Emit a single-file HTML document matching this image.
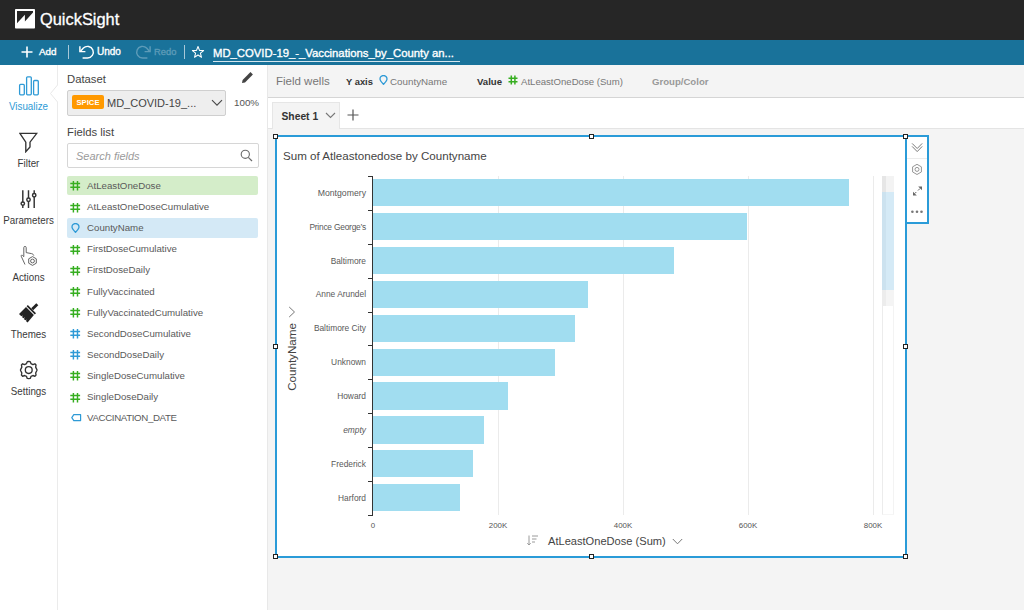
<!DOCTYPE html>
<html><head><meta charset="utf-8">
<style>
*{box-sizing:border-box;margin:0;padding:0}
html,body{width:1024px;height:610px;overflow:hidden;background:#f4f4f4;font-family:"Liberation Sans",sans-serif;color:#444}
.a{position:absolute;white-space:nowrap}
#top{position:absolute;left:0;top:0;width:1024px;height:40px;background:#262626}
#tb{position:absolute;left:0;top:40px;width:1024px;height:25px;background:#19729a;z-index:5}
#rail{position:absolute;left:0;top:64px;width:58px;height:546px;background:#fff;border-right:1px solid #ebebeb;z-index:2}
#panel{position:absolute;left:57px;top:64px;width:211px;height:546px;background:#fff;border-right:1px solid #e8e8e8}
#wells{position:absolute;left:268px;top:64px;width:756px;height:34px;background:#f4f4f4;border-bottom:1px solid #d5d5d5}
#tabs{position:absolute;left:268px;top:98px;width:756px;height:31px;background:#fff;border-bottom:1px solid #e4e4e4}
.rl{font-size:9.8px;color:#3a3a3a;text-align:center;width:57px;left:0;transform:scaleY(1.08)}
.fl{font-size:9.7px;color:#5a5a5a}
</style></head><body>
<div id="top">
  <svg class="a" style="left:15px;top:9px" width="20" height="20" viewBox="0 0 20 20">
    <rect x="0" y="0" width="20" height="19.6" rx="0.8" fill="#fff"/>
    <path d="M2 2 H18 V3.6 L9.9 12.5 V5.8 L2 14.2 Z" fill="#262626"/>
  </svg>
  <div class="a" style="left:40px;top:9px;font-size:16.4px;color:#fff;-webkit-text-stroke:0.3px #fff;line-height:20px">QuickSight</div>
</div>
<div id="tb">
  <svg class="a" style="left:21px;top:6px" width="12" height="12" viewBox="0 0 12 12"><path d="M6 0.5V11.5M0.5 6H11.5" stroke="#fff" stroke-width="1.6"/></svg>
  <div class="a" style="left:39px;top:5px;font-size:9.9px;color:#fff;-webkit-text-stroke:0.35px #fff;line-height:14px">Add</div>
  <div class="a" style="left:68px;top:5px;width:1px;height:14px;background:#a8c8d8"></div>
  <svg class="a" style="left:79px;top:5px" width="16" height="15" viewBox="0 0 16 15"><path d="M1.3 6.4 L4.4 3.1 A5.8 5.8 0 1 1 8.5 13 H3.6" fill="none" stroke="#fff" stroke-width="1.45"/><path d="M0.9 1.2 V6.6 H6.4" fill="none" stroke="#fff" stroke-width="1.45"/></svg>
  <div class="a" style="left:97px;top:5px;font-size:10px;color:#fff;-webkit-text-stroke:0.35px #fff;line-height:14px">Undo</div>
  <svg class="a" style="left:135px;top:5px" width="16" height="15" viewBox="0 0 16 15"><g transform="translate(16,0) scale(-1,1)"><path d="M1.3 6.4 L4.4 3.1 A5.8 5.8 0 1 1 8.5 13 H3.6" fill="none" stroke="#5d9bb8" stroke-width="1.45"/><path d="M0.9 1.2 V6.6 H6.4" fill="none" stroke="#5d9bb8" stroke-width="1.45"/></g></svg>
  <div class="a" style="left:154px;top:5px;font-size:9.4px;color:#5d9bb8;-webkit-text-stroke:0.35px #5d9bb8;line-height:14px">Redo</div>
  <div class="a" style="left:184px;top:5px;width:1px;height:14px;background:#a8c8d8"></div>
  <svg class="a" style="left:191px;top:5px" width="14" height="14" viewBox="0 0 14 14"><path d="M7 1.5 L8.5 5.4 L12.6 5.6 L9.4 8.2 L10.5 12.3 L7 10 L3.5 12.3 L4.6 8.2 L1.4 5.6 L5.5 5.4 Z" fill="none" stroke="#fff" stroke-width="1.05" stroke-linejoin="round"/></svg>
  <div class="a" style="left:213px;top:6px;font-size:11.3px;color:#fff;-webkit-text-stroke:0.35px #fff;line-height:15px">MD_COVID-19_-_Vaccinations_by_County an...</div>
  <div class="a" style="left:213px;top:20.6px;width:247px;height:1.4px;background:#d5e6ee"></div>
</div>
<div id="rail">
  <svg class="a" style="left:18px;top:12px" width="22" height="21" viewBox="0 0 22 21"><g fill="none" stroke="#2e9ad6" stroke-width="1.3"><rect x="1.6" y="8.4" width="4.7" height="10.4" rx="1"/><rect x="8.6" y="0.8" width="4.7" height="18" rx="1"/><rect x="15.6" y="4.5" width="4.7" height="14.3" rx="1"/></g></svg>
  <div class="a rl" style="top:36.8px;color:#2e9ad6">Visualize</div>
  <svg class="a" style="left:19px;top:68px" width="19" height="21" viewBox="0 0 19 21"><path d="M0.9 1.3 H17.8 L11 10.2 V15 L6.8 19.7 V10.2 Z" fill="none" stroke="#333" stroke-width="1.35" stroke-linejoin="miter"/></svg>
  <div class="a rl" style="top:93.6px">Filter</div>
  <svg class="a" style="left:20px;top:125px" width="18" height="21" viewBox="0 0 18 21"><g stroke="#333" stroke-width="1.45" fill="#fff"><path d="M2.8 1.3V19M8.5 1.3V19M14.2 1.3V19"/><circle cx="2.8" cy="14.6" r="1.7"/><circle cx="8.5" cy="10.7" r="1.7"/><circle cx="14.2" cy="6.2" r="1.7"/></g></svg>
  <div class="a rl" style="top:150.6px">Parameters</div>
  <svg class="a" style="left:20px;top:181px" width="19" height="22" viewBox="0 0 19 22"><g fill="none" stroke="#555" stroke-width="0.9" stroke-linejoin="round"><path d="M5 19.5 L1.2 11.2 C0.9 10.3 1.8 9.7 2.6 10.5 L3.8 11.7 V2.6 C3.8 1 6.2 1 6.2 2.6 V7.6 L11.5 8.6 C12.8 8.9 13.6 9.6 13.8 10.6"/><path d="M12.5 11.6 L16.3 13.8 V18.2 L12.5 20.4 L8.7 18.2 V13.8 Z"/><circle cx="12.5" cy="16" r="1.9"/></g></svg>
  <div class="a rl" style="top:207.6px">Actions</div>
  <svg class="a" style="left:18px;top:238px" width="21" height="22" viewBox="0 0 21 22"><g fill="#222"><path d="M13.2 6.3 L18.3 1.2 L20.3 3.2 L15.2 8.3 Z"/><path d="M8.6 4.2 L9.8 3 L18 11.2 L16.8 12.4 Z"/><path d="M8 5 L15.9 12.9 L9.6 20.6 L7.9 18.9 L8.8 17.4 L7.2 18.2 L5.9 16.9 L7 15.3 L5.3 16.3 L4 15 L5 13.4 L3.3 14.3 L1 12 Z"/></g></svg>
  <div class="a rl" style="top:264.6px">Themes</div>
  <svg class="a" style="left:19px;top:296px" width="19" height="20" viewBox="-0.5 -0.3 19.5 20.5"><g fill="none" stroke="#333" stroke-width="1.4"><path d="M9.5 1.2 L11 1.4 L11.8 3.4 L13.8 4.4 L15.8 3.6 L17 4.8 L16.6 7 L17.6 9 L18 10 L17.6 11 L16.6 13 L17 15.2 L15.8 16.4 L13.8 15.6 L11.8 16.6 L11 18.6 L9.5 18.8 L8 18.6 L7.2 16.6 L5.2 15.6 L3.2 16.4 L2 15.2 L2.4 13 L1.4 11 L1 10 L1.4 9 L2.4 7 L2 4.8 L3.2 3.6 L5.2 4.4 L7.2 3.4 L8 1.4 Z" stroke-linejoin="round"/><circle cx="9.5" cy="10" r="3.5"/></g></svg>
  <div class="a rl" style="top:321.6px">Settings</div>
</div>
<div id="panel">
  <div class="a" style="left:10px;top:8px;font-size:11.3px;color:#444;line-height:14px">Dataset</div>
  <svg class="a" style="left:184px;top:7px" width="13" height="13" viewBox="0 0 13 13"><path d="M1 12 L1.6 9 L9.5 1.1 L11.9 3.5 L4 11.4 Z" fill="#444"/></svg>
  <div class="a" style="left:10px;top:26px;width:159px;height:26px;background:#eeeeee;border:1px solid #cfcfcf;border-radius:2px"></div>
  <div class="a" style="left:15px;top:31px;width:32px;height:14.4px;background:#ff9900;border-radius:2px;color:#fff;font-size:7.6px;font-weight:bold;text-align:center;line-height:16.5px;letter-spacing:0.05px">SPICE</div>
  <div class="a" style="left:50px;top:33px;font-size:11px;color:#444;line-height:13px">MD_COVID-19_...</div>
  <svg class="a" style="left:154px;top:35px" width="12" height="8" viewBox="0 0 12 8"><path d="M1 1.2 L6 6.2 L11 1.2" fill="none" stroke="#4a4a4a" stroke-width="1.15"/></svg>
  <div class="a" style="left:177px;top:33px;font-size:9.8px;color:#555;line-height:12px">100%</div>
  <div class="a" style="left:10px;top:61px;font-size:11.3px;color:#444;line-height:14px">Fields list</div>
  <div class="a" style="left:10px;top:79px;width:192px;height:25px;background:#fff;border:1px solid #d6d6d6;border-radius:2px"></div>
  <div class="a" style="left:19px;top:85.6px;font-size:11px;font-style:italic;color:#9a9a9a;line-height:13px">Search fields</div>
  <svg class="a" style="left:183px;top:85px" width="13" height="13" viewBox="0 0 13 13"><circle cx="5.3" cy="5.3" r="4.1" fill="none" stroke="#6a6a6a" stroke-width="1.1"/><path d="M8.3 8.3 L12 12" stroke="#6a6a6a" stroke-width="1.2"/></svg>
<div class="a" style="left:10px;top:112px;width:191px;height:19px;background:#d4edc9;border-radius:2px"></div>
<svg class="a" style="left:13px;top:116px" width="11" height="11" viewBox="0 0 11 11"><path d="M3.4 0.9V10.4M7.5 0.9V10.4M0.3 3.5H10.1M0.3 7.3H10.1" stroke="#36ae20" stroke-width="1.45"/></svg>
<div class="a fl" style="left:30px;top:116.0px;line-height:12px">AtLeastOneDose</div>
<svg class="a" style="left:13px;top:138px" width="11" height="11" viewBox="0 0 11 11"><path d="M3.4 0.9V10.4M7.5 0.9V10.4M0.3 3.5H10.1M0.3 7.3H10.1" stroke="#36ae20" stroke-width="1.45"/></svg>
<div class="a fl" style="left:30px;top:137.1px;line-height:12px">AtLeastOneDoseCumulative</div>
<div class="a" style="left:10px;top:154px;width:191px;height:20px;background:#d4e9f6;border-radius:2px"></div>
<svg class="a" style="left:14px;top:159px" width="9" height="10" viewBox="0 0 9 10"><path d="M4.5 9.3 C2.6 7.2 1 5.6 1 4 A3.5 3.5 0 0 1 8 4 C8 5.6 6.4 7.2 4.5 9.3 Z" fill="none" stroke="#2e9ad6" stroke-width="1.3"/></svg>
<div class="a fl" style="left:30px;top:158.2px;line-height:12px">CountyName</div>
<svg class="a" style="left:13px;top:180px" width="11" height="11" viewBox="0 0 11 11"><path d="M3.4 0.9V10.4M7.5 0.9V10.4M0.3 3.5H10.1M0.3 7.3H10.1" stroke="#36ae20" stroke-width="1.45"/></svg>
<div class="a fl" style="left:30px;top:179.3px;line-height:12px">FirstDoseCumulative</div>
<svg class="a" style="left:13px;top:201px" width="11" height="11" viewBox="0 0 11 11"><path d="M3.4 0.9V10.4M7.5 0.9V10.4M0.3 3.5H10.1M0.3 7.3H10.1" stroke="#36ae20" stroke-width="1.45"/></svg>
<div class="a fl" style="left:30px;top:200.4px;line-height:12px">FirstDoseDaily</div>
<svg class="a" style="left:13px;top:222px" width="11" height="11" viewBox="0 0 11 11"><path d="M3.4 0.9V10.4M7.5 0.9V10.4M0.3 3.5H10.1M0.3 7.3H10.1" stroke="#36ae20" stroke-width="1.45"/></svg>
<div class="a fl" style="left:30px;top:221.5px;line-height:12px">FullyVaccinated</div>
<svg class="a" style="left:13px;top:243px" width="11" height="11" viewBox="0 0 11 11"><path d="M3.4 0.9V10.4M7.5 0.9V10.4M0.3 3.5H10.1M0.3 7.3H10.1" stroke="#36ae20" stroke-width="1.45"/></svg>
<div class="a fl" style="left:30px;top:242.6px;line-height:12px">FullyVaccinatedCumulative</div>
<svg class="a" style="left:13px;top:264px" width="11" height="11" viewBox="0 0 11 11"><path d="M3.4 0.9V10.4M7.5 0.9V10.4M0.3 3.5H10.1M0.3 7.3H10.1" stroke="#2e9ad6" stroke-width="1.45"/></svg>
<div class="a fl" style="left:30px;top:263.7px;line-height:12px">SecondDoseCumulative</div>
<svg class="a" style="left:13px;top:285px" width="11" height="11" viewBox="0 0 11 11"><path d="M3.4 0.9V10.4M7.5 0.9V10.4M0.3 3.5H10.1M0.3 7.3H10.1" stroke="#2e9ad6" stroke-width="1.45"/></svg>
<div class="a fl" style="left:30px;top:284.8px;line-height:12px">SecondDoseDaily</div>
<svg class="a" style="left:13px;top:306px" width="11" height="11" viewBox="0 0 11 11"><path d="M3.4 0.9V10.4M7.5 0.9V10.4M0.3 3.5H10.1M0.3 7.3H10.1" stroke="#36ae20" stroke-width="1.45"/></svg>
<div class="a fl" style="left:30px;top:305.9px;line-height:12px">SingleDoseCumulative</div>
<svg class="a" style="left:13px;top:328px" width="11" height="11" viewBox="0 0 11 11"><path d="M3.4 0.9V10.4M7.5 0.9V10.4M0.3 3.5H10.1M0.3 7.3H10.1" stroke="#36ae20" stroke-width="1.45"/></svg>
<div class="a fl" style="left:30px;top:327.0px;line-height:12px">SingleDoseDaily</div>
<svg class="a" style="left:13.5px;top:350px" width="11" height="8" viewBox="0 0 11 8"><path d="M2.8 0.7 H9.6 V6.6 H2.8 L0.8 3.65 Z" fill="none" stroke="#2e9ad6" stroke-width="1.2" stroke-linejoin="round"/></svg>
<div class="a fl" style="left:30px;top:348.1px;line-height:12px;letter-spacing:-0.35px">VACCINATION_DATE</div>
</div>
<div id="wells">
  <div class="a" style="left:8px;top:10px;font-size:11.5px;color:#777;line-height:14px">Field wells</div>
  <div class="a" style="left:78px;top:12px;font-size:9.4px;font-weight:bold;color:#333;line-height:12px">Y axis</div>
  <svg class="a" style="left:111px;top:11px" width="9" height="10" viewBox="0 0 9 10"><path d="M4.5 9.3 C2.6 7.2 1 5.6 1 4 A3.5 3.5 0 0 1 8 4 C8 5.6 6.4 7.2 4.5 9.3 Z" fill="none" stroke="#2e9ad6" stroke-width="1.3"/></svg>
  <div class="a" style="left:122px;top:12px;font-size:9.8px;color:#777;line-height:12px">CountyName</div>
  <div class="a" style="left:209px;top:12px;font-size:9.6px;font-weight:bold;color:#333;line-height:12px">Value</div>
  <svg class="a" style="left:240px;top:11px" width="10" height="10" viewBox="0 0 10 10"><path d="M3.3 0.5V9.5M6.9 0.5V9.5M0.5 3.2H9.5M0.5 6.8H9.5" stroke="#36ae20" stroke-width="1.5"/></svg>
  <div class="a" style="left:253px;top:12px;font-size:9.6px;color:#777;line-height:12px">AtLeastOneDose (Sum)</div>
  <div class="a" style="left:384px;top:12px;font-size:9.6px;font-weight:bold;color:#999;line-height:12px">Group/Color</div>
</div>
<div id="tabs">
  <div class="a" style="left:4px;top:4px;width:68px;height:27px;background:#f4f4f4;border:1px solid #e6e6e6;border-bottom:none"></div>
  <div class="a" style="left:13.5px;top:12px;font-size:10.3px;font-weight:bold;color:#333;line-height:13px">Sheet 1</div>
  <svg class="a" style="left:57px;top:14px" width="11" height="7" viewBox="0 0 11 7"><path d="M1 1 L5.5 5.5 L10 1" fill="none" stroke="#777" stroke-width="1.1"/></svg>
  <svg class="a" style="left:79px;top:11px" width="12" height="12" viewBox="0 0 12 12"><path d="M6 0.5V11.5M0.5 6H11.5" stroke="#555" stroke-width="1.2"/></svg>
</div>
<div id="vis">
<div class="a" style="left:275px;top:135px;width:632px;height:423px;background:#fff;border:2px solid #2a9bd8"></div>
<div class="a" style="left:498px;top:176px;width:1px;height:339px;background:#ebebeb"></div>
<div class="a" style="left:623px;top:176px;width:1px;height:339px;background:#ebebeb"></div>
<div class="a" style="left:748px;top:176px;width:1px;height:339px;background:#ebebeb"></div>
<div class="a" style="left:873px;top:176px;width:1px;height:339px;background:#ebebeb"></div>
<div class="a" style="left:882px;top:176px;width:12px;height:339px;background:#fff;border-left:1px solid #ececec;border-right:1px solid #f3f3f3;border-bottom:1px solid #f6f6f6"></div>
<div class="a" style="left:882px;top:176px;width:4px;height:16px;background:#e6e6e6"></div>
<div class="a" style="left:886px;top:176px;width:8px;height:16px;background:#f3f3f3"></div>
<div class="a" style="left:882px;top:192px;width:4px;height:98px;background:#cce2ef"></div>
<div class="a" style="left:886px;top:192px;width:8px;height:98px;background:#d5eaf6"></div>
<div class="a" style="left:882px;top:290px;width:4px;height:16px;background:#ececec"></div>
<div class="a" style="left:886px;top:290px;width:8px;height:16px;background:#f4f4f4"></div>
<div class="a" style="left:373px;top:179.1px;width:476.0px;height:27.4px;background:#a1ddf0"></div>
<div class="a" style="right:658px;top:187.7px;font-size:8.7px;color:#595959;line-height:10px;text-align:right">Montgomery</div>
<div class="a" style="left:373px;top:213.0px;width:373.6px;height:27.4px;background:#a1ddf0"></div>
<div class="a" style="right:658px;top:221.6px;font-size:8.4px;letter-spacing:-0.22px;color:#595959;line-height:10px;text-align:right">Prince George’s</div>
<div class="a" style="left:373px;top:246.9px;width:300.8px;height:27.4px;background:#a1ddf0"></div>
<div class="a" style="right:658px;top:255.5px;font-size:8.4px;color:#595959;line-height:10px;text-align:right">Baltimore</div>
<div class="a" style="left:373px;top:280.7px;width:214.8px;height:27.4px;background:#a1ddf0"></div>
<div class="a" style="right:658px;top:289.3px;font-size:8.4px;color:#595959;line-height:10px;text-align:right">Anne Arundel</div>
<div class="a" style="left:373px;top:314.6px;width:201.7px;height:27.4px;background:#a1ddf0"></div>
<div class="a" style="right:658px;top:323.2px;font-size:8.4px;color:#595959;line-height:10px;text-align:right">Baltimore City</div>
<div class="a" style="left:373px;top:348.5px;width:182.3px;height:27.4px;background:#a1ddf0"></div>
<div class="a" style="right:658px;top:357.1px;font-size:8.4px;color:#595959;line-height:10px;text-align:right">Unknown</div>
<div class="a" style="left:373px;top:382.4px;width:134.5px;height:27.4px;background:#a1ddf0"></div>
<div class="a" style="right:658px;top:391.0px;font-size:8.4px;color:#595959;line-height:10px;text-align:right">Howard</div>
<div class="a" style="left:373px;top:416.3px;width:110.8px;height:27.4px;background:#a1ddf0"></div>
<div class="a" style="right:658px;top:424.9px;font-size:8.4px;font-style:italic;color:#595959;line-height:10px;text-align:right">empty</div>
<div class="a" style="left:373px;top:450.1px;width:100.4px;height:27.4px;background:#a1ddf0"></div>
<div class="a" style="right:658px;top:458.7px;font-size:8.4px;color:#595959;line-height:10px;text-align:right">Frederick</div>
<div class="a" style="left:373px;top:484.0px;width:86.6px;height:27.4px;background:#a1ddf0"></div>
<div class="a" style="right:658px;top:492.6px;font-size:8.4px;color:#595959;line-height:10px;text-align:right">Harford</div>
<div class="a" style="left:372px;top:176px;width:1px;height:340px;background:#333"></div>
<div class="a" style="left:368px;top:176.0px;width:5px;height:1px;background:#333"></div>
<div class="a" style="left:368px;top:209.9px;width:5px;height:1px;background:#333"></div>
<div class="a" style="left:368px;top:243.8px;width:5px;height:1px;background:#333"></div>
<div class="a" style="left:368px;top:277.6px;width:5px;height:1px;background:#333"></div>
<div class="a" style="left:368px;top:311.5px;width:5px;height:1px;background:#333"></div>
<div class="a" style="left:368px;top:345.4px;width:5px;height:1px;background:#333"></div>
<div class="a" style="left:368px;top:379.3px;width:5px;height:1px;background:#333"></div>
<div class="a" style="left:368px;top:413.2px;width:5px;height:1px;background:#333"></div>
<div class="a" style="left:368px;top:447.0px;width:5px;height:1px;background:#333"></div>
<div class="a" style="left:368px;top:480.9px;width:5px;height:1px;background:#333"></div>
<div class="a" style="left:368px;top:514.8px;width:5px;height:1px;background:#333"></div>
<div class="a" style="left:373px;top:521px;width:40px;margin-left:-20px;text-align:center;font-size:7.9px;color:#555;line-height:10px">0</div>
<div class="a" style="left:498px;top:521px;width:40px;margin-left:-20px;text-align:center;font-size:7.9px;color:#555;line-height:10px">200K</div>
<div class="a" style="left:623px;top:521px;width:40px;margin-left:-20px;text-align:center;font-size:7.9px;color:#555;line-height:10px">400K</div>
<div class="a" style="left:748px;top:521px;width:40px;margin-left:-20px;text-align:center;font-size:7.9px;color:#555;line-height:10px">600K</div>
<div class="a" style="left:873px;top:521px;width:40px;margin-left:-20px;text-align:center;font-size:7.9px;color:#555;line-height:10px">800K</div>
<div class="a" style="left:283px;top:149px;font-size:11.6px;color:#444;line-height:14px">Sum of Atleastonedose by Countyname</div>
<svg class="a" style="left:527px;top:535px" width="12" height="11" viewBox="0 0 12 11"><g stroke="#9a9a9a" stroke-width="1" fill="none"><path d="M2 0.5V10M0.3 8.2L2 10L3.7 8.2"/><path d="M5 1H11M5 4H9.5M5 7H8"/></g></svg>
<div class="a" style="left:548px;top:535px;font-size:11.1px;color:#444;line-height:13px">AtLeastOneDose (Sum)</div>
<svg class="a" style="left:672px;top:538px" width="11" height="7" viewBox="0 0 11 7"><path d="M0.8 1 L5.5 5.8 L10.2 1" fill="none" stroke="#777" stroke-width="1"/></svg>
<div class="a" style="left:291.3px;top:356.7px;font-size:11.6px;color:#444;line-height:13px;transform:translate(-50%,-50%) rotate(-90deg)">CountyName</div>
<svg class="a" style="left:288px;top:306px" width="8" height="12" viewBox="0 0 8 12"><path d="M1.2 1 L6.5 6 L1.2 11" fill="none" stroke="#777" stroke-width="1"/></svg>
<div class="a" style="left:905px;top:135px;width:24px;height:89px;background:#fff;border:2px solid #2a9bd8"></div>
<div class="a" style="left:907px;top:158px;width:20px;height:1px;background:#ececec"></div>
<svg class="a" style="left:906px;top:138px" width="22" height="22" viewBox="0 0 22 22"><path d="M6.1 5.4 L11.2 10.5 L16.2 5.4 M6.1 8.4 L11.2 13.6 L16.2 8.4" fill="none" stroke="#7a7a7a" stroke-width="1"/></svg>
<svg class="a" style="left:906px;top:160px" width="22" height="22" viewBox="0 0 22 22"><path d="M11 4.3 L15.4 6.85 V11.95 L11 14.5 L6.6 11.95 V6.85 Z" fill="none" stroke="#8a8a8a" stroke-width="0.9" stroke-linejoin="round"/><circle cx="11" cy="9.4" r="2" fill="none" stroke="#8a8a8a" stroke-width="0.9"/></svg>
<svg class="a" style="left:906px;top:180px" width="22" height="22" viewBox="0 0 22 22"><g fill="#666"><path d="M16 6.5 H12.2 L16 10.3 Z"/><path d="M7 15.5 V11.7 L10.8 15.5 Z"/></g><path d="M14 8.5 L12 10.5 M8.8 13.5 L10.3 12" stroke="#666" stroke-width="1"/></svg>
<svg class="a" style="left:906px;top:202px" width="22" height="22" viewBox="0 0 22 22"><g fill="#777"><circle cx="6.4" cy="9.7" r="1.3"/><circle cx="11" cy="9.7" r="1.3"/><circle cx="15.5" cy="9.7" r="1.3"/></g></svg>
<div class="a" style="left:273px;top:134px;width:5px;height:5px;background:#fff;border:1px solid #222"></div>
<div class="a" style="left:589px;top:134px;width:5px;height:5px;background:#fff;border:1px solid #222"></div>
<div class="a" style="left:903px;top:134px;width:5px;height:5px;background:#fff;border:1px solid #222"></div>
<div class="a" style="left:273px;top:344px;width:5px;height:5px;background:#fff;border:1px solid #222"></div>
<div class="a" style="left:903px;top:344px;width:5px;height:5px;background:#fff;border:1px solid #222"></div>
<div class="a" style="left:273px;top:554px;width:5px;height:5px;background:#fff;border:1px solid #222"></div>
<div class="a" style="left:589px;top:554px;width:5px;height:5px;background:#fff;border:1px solid #222"></div>
<div class="a" style="left:903px;top:554px;width:5px;height:5px;background:#fff;border:1px solid #222"></div>
</div>
<svg class="a" style="left:50px;top:85px;z-index:3" width="9" height="17" viewBox="0 0 9 17"><path d="M7.5 0 L0.5 8.5 L7.5 17 H9 V0 Z" fill="#fff"/><path d="M7.5 0 L0.5 8.5 L7.5 17" fill="none" stroke="#e8e8e8" stroke-width="1"/></svg>
</body></html>
